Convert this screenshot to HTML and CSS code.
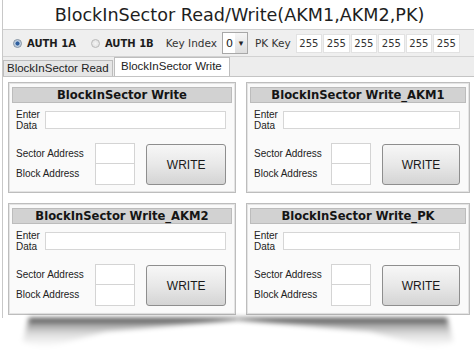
FILE: index.html
```html
<!DOCTYPE html>
<html>
<head>
<meta charset="utf-8">
<link rel="stylesheet" href="styles.css">
</head>
<body>
<div class="window">
  <div class="title">BlockInSector Read/Write(AKM1,AKM2,PK)</div>
  <div class="toolbar">
    <span class="radio on"></span><span class="rlabel">AUTH 1A</span>
    <span class="radio off"></span><span class="rlabel">AUTH 1B</span>
    <span class="lbl keyidx">Key Index</span>
    <span class="select"><span class="sval">0</span><span class="sbtn">&#9662;</span></span>
    <span class="lbl pk">PK Key</span>
    <span class="keys">
      <span class="key">255</span><span class="key">255</span><span class="key">255</span><span class="key">255</span><span class="key">255</span><span class="key">255</span>
    </span>
  </div>
  <div class="tabs">
    <div class="tab">BlockInSector Read</div>
    <div class="tab active">BlockInSector Write</div>
  </div>
  <div class="panel">
    <div class="grid">
      <div class="group">
        <div class="ghead">BlockInSector Write</div>
        <div class="gbody">
          <div class="datarow"><div class="dlabel">Enter<br>Data</div><div class="dinput"></div></div>
          <div class="addr">
            <div class="alabels"><div>Sector Address</div><div>Block Address</div></div>
            <div class="aboxes"><div class="abox"></div><div class="abox"></div></div>
            <div class="btn">WRITE</div>
          </div>
        </div>
      </div>
      <div class="group">
        <div class="ghead">BlockInSector Write_AKM1</div>
        <div class="gbody">
          <div class="datarow"><div class="dlabel">Enter<br>Data</div><div class="dinput"></div></div>
          <div class="addr">
            <div class="alabels"><div>Sector Address</div><div>Block Address</div></div>
            <div class="aboxes"><div class="abox"></div><div class="abox"></div></div>
            <div class="btn">WRITE</div>
          </div>
        </div>
      </div>
      <div class="group">
        <div class="ghead">BlockInSector Write_AKM2</div>
        <div class="gbody">
          <div class="datarow"><div class="dlabel">Enter<br>Data</div><div class="dinput"></div></div>
          <div class="addr">
            <div class="alabels"><div>Sector Address</div><div>Block Address</div></div>
            <div class="aboxes"><div class="abox"></div><div class="abox"></div></div>
            <div class="btn">WRITE</div>
          </div>
        </div>
      </div>
      <div class="group">
        <div class="ghead">BlockInSector Write_PK</div>
        <div class="gbody">
          <div class="datarow"><div class="dlabel">Enter<br>Data</div><div class="dinput"></div></div>
          <div class="addr">
            <div class="alabels"><div>Sector Address</div><div>Block Address</div></div>
            <div class="aboxes"><div class="abox"></div><div class="abox"></div></div>
            <div class="btn">WRITE</div>
          </div>
        </div>
      </div>
    </div>
  </div>
</div>
<div class="shadow">
  <div class="sh"><div class="shape left"></div></div>
  <div class="sh"><div class="shape right"></div></div>
</div>
</body>
</html>
```
FILE: styles.css
```css
* { box-sizing: border-box; }
html, body { margin: 0; padding: 0; background: #ffffff; }
body { width: 474px; height: 351px; overflow: hidden; font-family: "DejaVu Sans", sans-serif; color: #222; }

.window {
  margin-left: 2px;
  border-left: 1px solid #c8c8c8;
  width: 472px;
}

.title {
  height: 30px;
  line-height: 30px;
  text-align: center;
  font-size: 17.6px;
  color: #1e1e1e;
  background: #fff;
  border-bottom: 1px solid #cfcfcf;
  padding-left: 2px;
}

.toolbar {
  height: 27px;
  background: #efefef;
  border-bottom: 1px solid #d2d2d2;
  display: flex;
  align-items: center;
  padding-left: 10px;
  font-size: 10px;
}
.radio {
  width: 9px; height: 9px; border-radius: 50%;
  display: inline-block; flex: none;
}
.radio.on {
  border: 1px solid #7f8fa0;
  background: radial-gradient(circle, #2f5f9e 0 35%, #9fb7d3 45%, #e6ecf3 80%);
}
.radio.off {
  border: 1px solid #b9b9b9;
  background: radial-gradient(circle, #f4f4f4, #dcdcdc);
  margin-left: 15px;
}
.rlabel { font-weight: bold; margin-left: 5px; color: #1c1c1c; }
.lbl { color: #333; font-size: 10.5px; }
.keyidx { margin-left: 12px; }
.select {
  margin-left: 5px;
  width: 26px; height: 22px;
  border: 1px solid #a8a8a8;
  background: #fff;
  display: flex;
  align-items: center;
  font-size: 11px;
}
.sval { padding-left: 3px; width: 12px; }
.sbtn {
  flex: 1; height: 100%;
  display: flex; align-items: center; justify-content: center;
  font-size: 9px; color: #222;
  background: linear-gradient(#f6f6f6, #dedede);
}
.pk { margin-left: 7px; }
.keys { display: flex; gap: 1px; margin-left: 5px; }
.key {
  width: 26.5px; height: 19px;
  background: #fff;
  border: 1px solid #e2e2e2;
  display: flex; align-items: center; justify-content: center;
  font-size: 10px; color: #333;
}

.tabs {
  height: 19px;
  background: #ededed;
  display: flex;
  align-items: flex-end;
  font-family: "Liberation Sans", sans-serif;
  font-size: 11.5px;
  color: #222;
}
.tab {
  height: 16px;
  line-height: 15px;
  padding: 0 3px;
  width: 110px;
  background: #e6e6e6;
  border: 1px solid #bdbdbd;
  border-bottom: none;
}
.tab.active {
  height: 19px;
  line-height: 17px;
  width: 116px;
  background: #fff;
  padding-left: 6px;
  margin-left: 1px;
}

.panel {
  background: #fff;
  border-top: 1px solid #c4c4c4;
  padding: 5px 3px 3px 5px;
}
.grid {
  display: grid;
  grid-template-columns: 228px 224px;
  grid-template-rows: 111px 112px;
  column-gap: 10px;
  row-gap: 10px;
}
.group {
  border: 1px solid #bdbdbd;
  box-shadow: inset 0 0 0 1px #e4e4e4;
  background: #fafafa;
  padding: 4px 3px 0 3px;
  font-family: "Liberation Sans", sans-serif;
}
.ghead {
  height: 16px;
  background: #d2d2d2;
  border: 1px solid #bcbcbc;
  text-align: center;
  font-family: "DejaVu Sans", sans-serif;
  font-weight: bold;
  font-size: 11.6px;
  line-height: 14px;
  color: #151515;
}
.gbody { padding: 5px 6px 0 4px; }
.datarow { display: flex; align-items: center; height: 23px; }
.dlabel { width: 29px; font-size: 10px; line-height: 11px; color: #222; }
.dinput {
  flex: 1; height: 18px;
  background: #fff;
  border: 1px solid #d6d6d6;
}
.addr { display: flex; margin-top: 12px; align-items: flex-start; }
.alabels {
  width: 79px;
  font-size: 10px;
  color: #222;
  display: flex; flex-direction: column;
  padding-top: 5px;
  gap: 9px;
}
.aboxes { width: 41px; display: flex; flex-direction: column; }
.abox { height: 21px; background: #fff; border: 1px solid #d4d4d4; }
.abox + .abox { margin-top: -1px; height: 22px; }
.btn {
  margin-left: 11px;
  margin-top: 1px;
  width: 80px; height: 41px;
  border: 1px solid #8e8e8e;
  border-radius: 3px;
  background: linear-gradient(#f7f7f7, #e8e8e8 50%, #d4d4d4);
  display: flex; align-items: center; justify-content: center;
  font-size: 12px;
  color: #1a1a1a;
}

.shadow {
  display: flex;
  padding: 0 16px 0 18px;
  height: 32px;
}
.sh {
  flex: 1;
  height: 30px;
  filter: blur(2.5px);
}
.shape {
  height: 100%;
  background: linear-gradient(rgba(0,0,0,0.85), rgba(0,0,0,0.4) 18%, rgba(0,0,0,0.14) 50%, rgba(0,0,0,0.03) 85%, rgba(0,0,0,0));
}
.shape.left { clip-path: polygon(5% 0, 100% 0, 100% 6%, 40% 45%, 12% 100%, 2% 80%); }
.shape.right { clip-path: polygon(0 0, 95% 0, 98% 80%, 88% 100%, 60% 45%, 0 6%); }
```
